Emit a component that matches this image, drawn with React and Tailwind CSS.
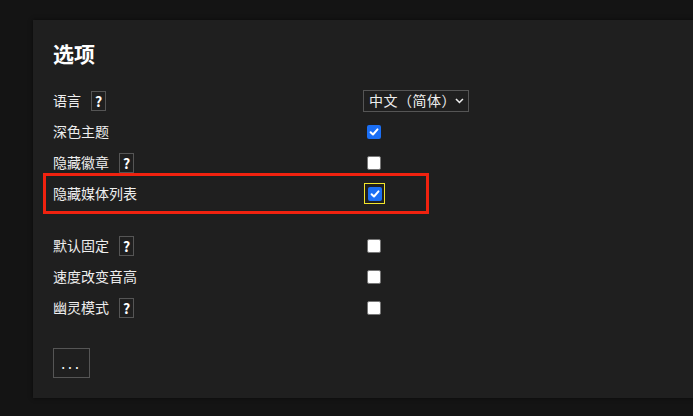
import React from 'react';

const font = { fontFamily: '"Noto Sans CJK SC", "Noto Sans", sans-serif' };

function Help() {
  return (
    <span className="ml-[10px] inline-flex h-5 w-[15px] items-center justify-center border border-[#555] text-[14px] font-bold leading-none text-white">
      ?
    </span>
  );
}

function Check({ checked, focused }) {
  const box = checked ? (
    <span className="flex h-[14px] w-[14px] items-center justify-center rounded-[2px] bg-[#1b6ff5]">
      <svg width="10" height="10" viewBox="0 0 10 10">
        <path d="M1.6 5.2 L4 7.5 L8.5 2.4" fill="none" stroke="white" strokeWidth="2" strokeLinecap="round" strokeLinejoin="round" />
      </svg>
    </span>
  ) : (
    <span className="block h-[14px] w-[14px] rounded-[2px] border border-[#777] bg-white" />
  );
  if (focused) {
    return (
      <span className="ml-[-3px] flex h-[21px] w-[21px] items-center justify-center border border-[#f2e52a]">
        {box}
      </span>
    );
  }
  return box;
}

function Row({ label, help, children, highlight, className = '' }) {
  return (
    <div className={`relative flex h-[31px] items-center ${className}`}>
      {highlight && (
        <div className="pointer-events-none absolute left-[-10px] top-[-5px] h-[41px] w-[386px] border-[3px] border-[#f0220f]" />
      )}
      <div className="flex w-[310px] items-center">
        <span className="text-[14px] text-[#eee]">{label}</span>
        {help && <Help />}
      </div>
      <div className="flex items-center">{children}</div>
    </div>
  );
}

function Box({ children }) {
  return <div className="ml-1 flex items-center">{children}</div>;
}

export default function App() {
  return (
    <div className="h-[416px] w-[693px] overflow-hidden bg-[#141414]" style={font}>
      <div className="ml-[33px] mt-5 w-[700px] bg-[#1f1f1f] pb-5 pl-5 pt-[18px] shadow-[0_0_4px_rgba(0,0,0,0.6)]">
        <h1 className="text-[21px] font-bold leading-[30px] text-white">选项</h1>
        <div className="mt-[17px]">
          <Row label="语言" help>
            <div className="flex h-[22px] w-[106px] items-center justify-between border border-[#555] pl-[5px] pr-[4px] text-[14px] text-[#eee]">
              <span className="tracking-[0.5px]">中文（简体）</span>
              <svg width="9" height="6" viewBox="0 0 9 6">
                <path d="M1 1 L4.5 4.5 L8 1" fill="none" stroke="#eee" strokeWidth="1.6" />
              </svg>
            </div>
          </Row>
          <Row label="深色主题">
            <Box><Check checked /></Box>
          </Row>
          <Row label="隐藏徽章" help>
            <Box><Check /></Box>
          </Row>
          <Row label="隐藏媒体列表" highlight className="mb-[21px]">
            <Box><Check checked focused /></Box>
          </Row>
          <Row label="默认固定" help>
            <Box><Check /></Box>
          </Row>
          <Row label="速度改变音高">
            <Box><Check /></Box>
          </Row>
          <Row label="幽灵模式" help>
            <Box><Check /></Box>
          </Row>
        </div>
        <button className="mt-[25px] flex h-[30px] w-[37px] items-center justify-center border border-[#555] text-[14px] tracking-[3px] text-white">
          ...
        </button>
      </div>
    </div>
  );
}
